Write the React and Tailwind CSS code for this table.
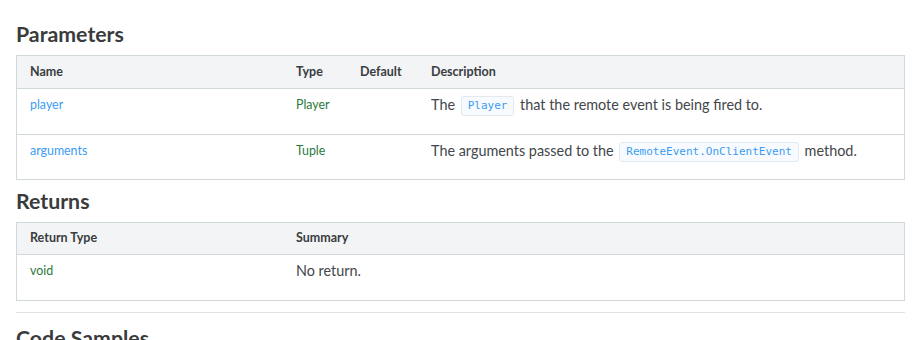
const params = [
  {
    name: "player",
    type: "Player",
    desc: (
      <>
        The <Code>Player</Code> that the remote event is being fired to.
      </>
    ),
  },
  {
    name: "arguments",
    type: "Tuple",
    desc: (
      <>
        The arguments passed to the <Code>RemoteEvent.OnClientEvent</Code> method.
      </>
    ),
  },
];

function Code({ children }) {
  return (
    <code className="mx-[2px] inline-block rounded-[3px] border border-[#e3e9ef] bg-[#f7fbff] px-[6px] py-[1px] align-middle font-['DejaVu_Sans_Mono',monospace] text-[11px] leading-[16px] text-[#3d9bf0]">
      {children}
    </code>
  );
}

function Heading({ children, className = "" }) {
  return (
    <h2 className={"text-[21.3px] font-bold leading-[24px] text-[#393b3d] " + className}>{children}</h2>
  );
}

export default function App() {
  return (
    <div className="min-h-[340px] w-[920px] overflow-hidden bg-white px-4 font-['Lato',sans-serif] text-[#43474b]">
      <Heading className="pt-[22px] pb-[9px]">Parameters</Heading>
      <div className="w-[889px] border border-[#d2d9dd]">
        <div className="grid h-[33px] grid-cols-[266px_64px_71px_1fr] items-center border-b border-[#d2d9dd] bg-[#f2f4f6] text-[12.5px] font-bold text-[#3a3d40]">
          <div className="pl-[13px]">Name</div>
          <div className="pl-[13px]">Type</div>
          <div className="pl-[13px]">Default</div>
          <div className="pl-[13px]">Description</div>
        </div>
        {params.map((p, i) => (
          <div
            key={p.name}
            className={
              "grid grid-cols-[266px_64px_71px_1fr] " +
              (i === 0 ? "h-[46px] border-b border-[#d2d9dd]" : "h-[44px]")
            }
          >
            <div className="pl-[13px] pt-[7px] text-[12.4px] text-[#3b9cf3]">{p.name}</div>
            <div className="pl-[13px] pt-[7px] text-[12.4px] text-[#2a7a3a]">{p.type}</div>
            <div />
            <div className="pl-[13px] pt-[6px] text-[14.4px] leading-[20px]">{p.desc}</div>
          </div>
        ))}
      </div>

      <Heading className="pt-[9px] pb-[9px]">Returns</Heading>
      <div className="w-[889px] border border-[#d2d9dd]">
        <div className="grid h-[32px] grid-cols-[266px_1fr] items-center border-b border-[#d2d9dd] bg-[#f2f4f6] text-[12.5px] font-bold text-[#3a3d40]">
          <div className="pl-[13px]">Return Type</div>
          <div className="pl-[13px]">Summary</div>
        </div>
        <div className="grid h-[45px] grid-cols-[266px_1fr]">
          <div className="pl-[13px] pt-[7px] text-[12.4px] text-[#2a7a3a]">void</div>
          <div className="pl-[13px] pt-[6px] text-[14.4px] leading-[20px]">No return.</div>
        </div>
      </div>

      <hr className="mt-[11px] w-[889px] border-t border-[#dde2e5]" />
      <Heading className="pt-[13px]">Code Samples</Heading>
    </div>
  );
}
